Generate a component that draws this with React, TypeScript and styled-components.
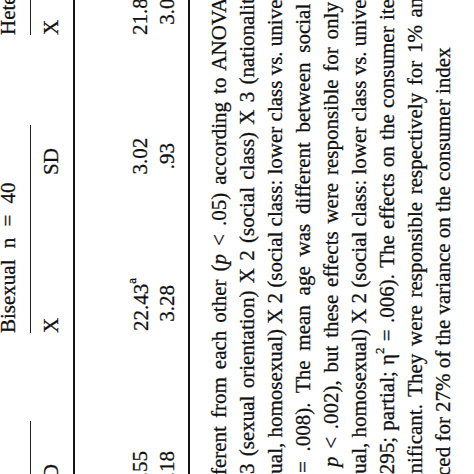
import React from "react";
import styled, { createGlobalStyle, css } from "styled-components";

const GlobalStyle = createGlobalStyle`
  html, body {
    margin: 0;
    padding: 0;
    background: #ffffff;
    overflow: hidden;
  }
`;

// the scanned page is lying on its side, so the sheet is laid out upright and turned
const Sheet = styled.div`
  width: 474px;
  height: 474px;
  overflow: hidden;
  transform: rotate(-90deg);
  background: #ffffff;
  color: #111111;
  font-family: "Liberation Serif", "Times New Roman", serif;
  font-size: 21px;
  -webkit-text-stroke: 0.3px #111111;
`;

const columns = css`
  display: grid;
  grid-template-columns: 133px 88px 59px 99px 38px 12px 90px 135px;
  width: 654px;
  margin-left: -80px;
  line-height: 16px;
  white-space: nowrap;
`;

const GroupRow = styled.div`
  ${columns}
`;

const GroupHead = styled.div<{ $col: string }>`
  grid-column: ${({ $col }) => $col};
  padding-bottom: 14px;
  border-bottom: 1px solid #222;
  word-spacing: 6px;
`;

const ColumnRow = styled.div`
  ${columns}
  padding: 12px 0 14px;
  border-bottom: 2px solid #151515;
`;

const Body = styled.div`
  ${columns}
  row-gap: 10px;
  padding: 57px 0 13px;
  border-bottom: 2px solid #151515;
`;

const Cell = styled.div<{ $col: string; $align?: string; $pad?: number }>`
  grid-column: ${({ $col }) => $col};
  text-align: ${({ $align }) => $align || "left"};
  padding-right: ${({ $pad }) => $pad || 0}px;
`;

const Mark = styled.sup`
  font-size: 13px;
  line-height: 0;
  vertical-align: 12px;
  margin-right: -7px;
`;

const Note = styled.div`
  padding-top: 15px;
  line-height: 28px;
`;

const NoteLine = styled.div<{ $shift: number; $ws?: number }>`
  white-space: nowrap;
  margin-left: ${({ $shift }) => $shift}px;
  word-spacing: ${({ $ws }) => $ws || 0}px;
`;

const Power = styled.sup`
  font-size: 13px;
  line-height: 0;
  vertical-align: 10px;
`;

const App = () => {
  return (
    <>
      <GlobalStyle />
      <Sheet>
        <GroupRow>
          <GroupHead $col="1">&nbsp;</GroupHead>
          <GroupHead $col="3 / 7">Bisexual n = 40</GroupHead>
          <GroupHead $col="8">Heterosexual n = 51</GroupHead>
        </GroupRow>
        <ColumnRow>
          <Cell $col="1" $align="right" $pad={43}>SD</Cell>
          <Cell $col="3">X</Cell>
          <Cell $col="5">SD</Cell>
          <Cell $col="8">X</Cell>
        </ColumnRow>
        <Body>
          <Cell $col="1" $align="right" $pad={30}>3.55</Cell>
          <Cell $col="3" $align="right" $pad={11}>
            22.43<Mark>a</Mark>
          </Cell>
          <Cell $col="5" $align="center">3.02</Cell>
          <Cell $col="8" $align="right" $pad={88}>21.86</Cell>

          <Cell $col="1" $align="right" $pad={30}>1.18</Cell>
          <Cell $col="3" $align="right" $pad={11}>3.28</Cell>
          <Cell $col="5" $align="center">.93</Cell>
          <Cell $col="8" $align="right" $pad={88}>3.04</Cell>
        </Body>
        <Note>
          <NoteLine $shift={-24} $ws={2.8}>
            different from each other (<i>p</i> &lt; .05) according to ANOVA
          </NoteLine>
          <NoteLine $shift={0} $ws={2}>
            3 (sexual orientation) X 2 (social class) X 3 (nationality)
          </NoteLine>
          <NoteLine $shift={-44}>
            bisexual, homosexual) X 2 (social class: lower class vs. university
          </NoteLine>
          <NoteLine $shift={1} $ws={4.5}>
            = .008). The mean age was different between social class
          </NoteLine>
          <NoteLine $shift={7} $ws={2.5}>
            <i>p</i> &lt; .002), but these effects were responsible for only
          </NoteLine>
          <NoteLine $shift={-44}>
            bisexual, homosexual) X 2 (social class: lower class vs. university
          </NoteLine>
          <NoteLine $shift={-16} $ws={1}>
            3.295; partial; η<Power>2</Power> = .006). The effects on the consumer items
          </NoteLine>
          <NoteLine $shift={-24} $ws={2.4}>
            significant. They were responsible respectively for 1% and
          </NoteLine>
          <NoteLine $shift={-51}>
            produced for 27% of the variance on the consumer index
          </NoteLine>
        </Note>
      </Sheet>
    </>
  );
};

export default App;
